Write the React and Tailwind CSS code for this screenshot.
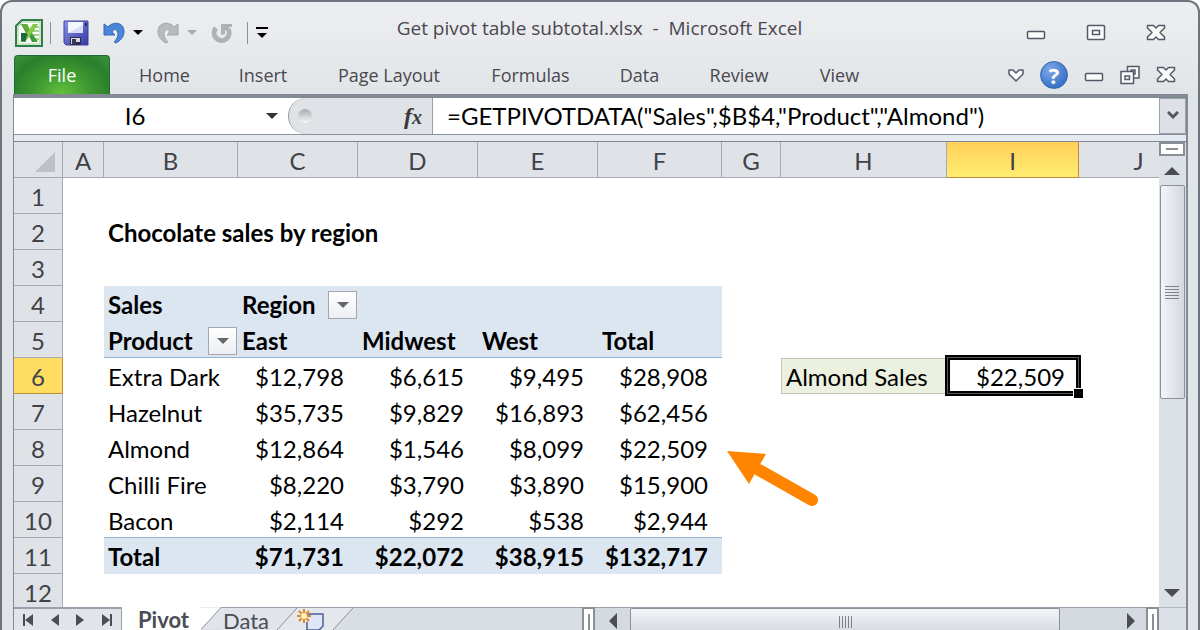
import clsx from 'clsx'

const ribbonTabs = [
  { name: 'Home', width: 'w-[99px]' },
  { name: 'Insert', width: 'w-[98px]' },
  { name: 'Page Layout', width: 'w-[154px]' },
  { name: 'Formulas', width: 'w-[129px]' },
  { name: 'Data', width: 'w-[89px]' },
  { name: 'Review', width: 'w-[110px]' },
  { name: 'View', width: 'w-[91px]' },
];

const columns = [
  { letter: 'A', width: 'w-[41px]' },
  { letter: 'B', width: 'w-[134px]' },
  { letter: 'C', width: 'w-[120px]' },
  { letter: 'D', width: 'w-[120px]' },
  { letter: 'E', width: 'w-[120px]' },
  { letter: 'F', width: 'w-[124px]' },
  { letter: 'G', width: 'w-[59px]' },
  { letter: 'H', width: 'w-[166px]' },
  { letter: 'I', width: 'w-[132px]' },
  { letter: 'J', width: 'w-[120px]' },
];

const cells = {
  2: { B: 'Chocolate sales by region' },
  4: { B: 'Sales', C: 'Region' },
  5: { B: 'Product', C: 'East', D: 'Midwest', E: 'West', F: 'Total' },
  6: { B: 'Extra Dark', C: '$12,798', D: '$6,615', E: '$9,495', F: '$28,908', H: 'Almond Sales', I: '$22,509' },
  7: { B: 'Hazelnut', C: '$35,735', D: '$9,829', E: '$16,893', F: '$62,456' },
  8: { B: 'Almond', C: '$12,864', D: '$1,546', E: '$8,099', F: '$22,509' },
  9: { B: 'Chilli Fire', C: '$8,220', D: '$3,790', E: '$3,890', F: '$15,900' },
  10: { B: 'Bacon', C: '$2,114', D: '$292', E: '$538', F: '$2,944' },
  11: { B: 'Total', C: '$71,731', D: '$22,072', E: '$38,915', F: '$132,717' },
};

const rowNumbers = [1, 2, 3, 4, 5, 6, 7, 8, 9, 10, 11, 12];
const boldRows = [2, 4, 5, 11];
const shadedRows = [4, 5, 11];
const filterCells = ['C4', 'B5'];
const selected = { column: 'I', row: 6 };

const Triangle = ({ direction = 'down', className = 'h-[5px] w-[10px]' }) => {
  const points = {
    down: '0,0 10,0 5,10',
    up: '0,10 10,10 5,0',
    left: '10,0 10,10 0,5',
    right: '0,0 0,10 10,5',
  };
  return (
    <svg viewBox="0 0 10 10" preserveAspectRatio="none" className={className} fill="currentColor">
      <polygon points={points[direction]} />
    </svg>
  );
};

const ExcelIcon = () => (
  <svg viewBox="0 0 28 28" className="h-7 w-7">
    <path d="M7 1H27V27H1V7Z" fill="#f4faf2" stroke="#2f7d4b" strokeWidth="2" />
    <path d="M3 8L8 3H25V25H3Z" fill="#fff" stroke="#9fd08b" strokeWidth="1" />
    <path d="M17 8h7M18 12h6M18 16h6M18 20h6" stroke="#a5d493" strokeWidth="2" />
    <path d="M6 5H12L15 11L18 5H23L17 14L23 23H17L14 17L10 23H5L11 14Z" fill="#3f9a3a" />
    <path d="M18 5H23L10 23H5Z" fill="#8ccb45" />
    <path d="M6 5H12L14 9L11 14Z" fill="#5fae3d" />
    <path d="M6 22L6 14L11 14L14 17L10 23Z" fill="#1d6a41" />
    <path d="M10 23L18 12L19 8L12 17Z" fill="#8ccb45" />
  </svg>
);

const SaveIcon = () => (
  <svg viewBox="0 0 26 26" className="h-[26px] w-[26px]">
    <defs>
      <linearGradient id="disk" x1="0" y1="0" x2="1" y2="1">
        <stop offset="0" stopColor="#8b92e8" />
        <stop offset="1" stopColor="#3438a0" />
      </linearGradient>
    </defs>
    <path d="M1 1H25V25H3L1 23Z" fill="url(#disk)" stroke="#3f439c" />
    <path d="M5 2H20V13H5Z" fill="#f3f6fd" />
    <path d="M5 13L20 5V13Z" fill="#d7def3" />
    <rect x="22" y="3" width="2" height="3" fill="#272b72" />
    <rect x="7" y="17" width="11" height="8" fill="#2b2e4e" />
    <path d="M8 18H17V22H13V24H8Z" fill="#d6d9e4" />
    <rect x="9" y="19" width="4" height="5" fill="#383b50" />
  </svg>
);

const UndoIcon = ({ flipped }) => (
  <svg viewBox="0 0 22 22" className={clsx('h-[22px] w-[22px]', flipped && '-scale-x-100')}>
    <path
      d="M1 2L5 5C9 0 17 0 20 5C23 12 19 18 13 21L11 20C15 16 16 12 14 9C13 7 11 7 9 10L12 13H1Z"
      fill={flipped ? '#b9babd' : '#4c86d8'}
      stroke={flipped ? '#a4a5a9' : '#3468bb'}
      strokeWidth="1"
    />
  </svg>
);

const RepeatIcon = () => (
  <svg viewBox="0 0 22 22" className="h-[22px] w-[22px]">
    <path d="M5 6A7.500 7.500 0 1 0 17 7" fill="none" stroke="#b0b1b4" strokeWidth="5" />
    <path d="M10 2H21V5H18L17 8L14 8V12L10 13Z" fill="#b0b1b4" />
  </svg>
);

const MinimizeIcon = () => (
  <svg viewBox="0 0 20 20" className="h-5 w-5">
    <rect x="1.500" y="8.500" width="17" height="7" rx="1" fill="#fbfbfc" stroke="#555867" strokeWidth="1.500" />
  </svg>
);

const MaximizeIcon = () => (
  <svg viewBox="0 0 20 20" className="h-5 w-5">
    <rect x="1.500" y="2.500" width="17" height="14" rx="1" fill="#fbfbfc" stroke="#555867" strokeWidth="1.500" />
    <rect x="6.500" y="7.500" width="7" height="4" fill="#fff" stroke="#555867" strokeWidth="1.500" />
  </svg>
);

const RestoreIcon = () => (
  <svg viewBox="0 0 20 20" className="h-5 w-5" fill="#fbfbfc" stroke="#555867" strokeWidth="1.500">
    <path d="M7.500 1.500H19V13H7.500Z" />
    <path d="M11 5H15V9H11Z" />
    <path d="M1 6.500H13.500V18.500H1Z" />
    <path d="M5 11H9.500V14.500H5Z" />
  </svg>
);

const CloseIcon = () => (
  <svg viewBox="0 0 20 20" className="h-5 w-5">
    <path
      d="M1.500 2.500H7.500L10 5L12.500 2.500H18.500V5L14 9.500L18.500 14V16.500H12.500L10 14L7.500 16.500H1.500V14L6 9.500L1.500 5Z"
      fill="#fbfbfc"
      stroke="#555867"
      strokeWidth="1.500"
      strokeLinejoin="round"
    />
  </svg>
);

const TitleBar = () => (
  <header className="flex h-[53px] items-center">
    <div className="flex flex-1 items-center pt-2">
      <div className="flex w-[33px] pl-[2px]"><ExcelIcon /></div>
      <span className="ml-1 h-[22px] w-px bg-[#8d9096]" />
      <button aria-label="Save" className="ml-3"><SaveIcon /></button>
      <button aria-label="Undo" className="ml-[14px]"><UndoIcon /></button>
      <button aria-label="Undo history" className="ml-2 text-black"><Triangle /></button>
      <button aria-label="Redo" className="ml-[14px]"><UndoIcon flipped /></button>
      <button aria-label="Redo history" className="ml-2 text-[#a9abaf]"><Triangle /></button>
      <button aria-label="Repeat" className="ml-[14px]"><RepeatIcon /></button>
      <span className="ml-[14px] h-[22px] w-px bg-[#8d9096]" />
      <button aria-label="Customize toolbar" className="ml-2 flex flex-col items-center gap-1 text-black">
        <span className="h-[2px] w-3 bg-black" />
        <Triangle />
      </button>
    </div>
    <h1 className="pl-5 font-['Open_Sans',sans-serif] text-[19px] text-[#4b4750]">
      Get pivot table subtotal.xlsx&nbsp; -&nbsp; Microsoft Excel
    </h1>
    <div className="flex flex-1 items-center justify-end gap-10 pt-2 pr-[22px]">
      <button aria-label="Minimize"><MinimizeIcon /></button>
      <button aria-label="Restore"><MaximizeIcon /></button>
      <button aria-label="Close"><CloseIcon /></button>
    </div>
  </header>
);

const Ribbon = () => (
  <nav className="flex h-[39px] items-stretch justify-between font-['Open_Sans',sans-serif] text-[18px] text-[#4b4750]">
    <div className="flex">
      <button className="mr-[5px] ml-px w-24 rounded-t-[4px] border border-b-0 border-[#1f6b33] bg-[radial-gradient(ellipse_at_bottom,#62c13c_0%,#3c9630_45%,#2a7f2c_75%,#3f9440_100%)] pt-px text-white">
        File
      </button>
      {ribbonTabs.map((tab) => (
        <button key={tab.name} className={clsx('pt-[2px] text-center whitespace-nowrap', tab.width)}>
          {tab.name}
        </button>
      ))}
    </div>
    <div className="flex items-center gap-4 pr-3">
      <button aria-label="Collapse ribbon">
        <svg viewBox="0 0 16 14" className="h-[14px] w-4">
          <path d="M1 2H5L8 5L11 2H15V6L8 13L1 6Z" fill="#fbfbfc" stroke="#555867" strokeWidth="1.500" strokeLinejoin="round" />
        </svg>
      </button>
      <button
        aria-label="Help"
        className="h-7 w-7 rounded-full border border-[#3565b0] bg-[radial-gradient(circle_at_35%_30%,#7fa9e8,#3b74c9_70%)] text-[22px] leading-6 font-bold text-white"
      >
        ?
      </button>
      <button aria-label="Minimize workbook"><MinimizeIcon /></button>
      <button aria-label="Restore workbook"><RestoreIcon /></button>
      <button aria-label="Close workbook"><CloseIcon /></button>
    </div>
  </nav>
);

const FormulaBar = () => (
  <div className="flex h-[37px] border-b border-[#8c929b] bg-white text-2xl text-black">
    <input aria-label="Name box" defaultValue="I6" className="w-[242px] bg-white text-center text-2xl outline-none" />
    <button aria-label="Name list" className="flex w-[32px] items-center justify-center text-[#333]">
      <Triangle className="h-[6px] w-3" />
    </button>
    <div className="flex w-[145px] items-center justify-between rounded-l-full border border-y-0 border-[#989ea6] bg-[#dfe2e7] pr-[10px] pl-[9px]">
      <span className="h-[14px] w-[14px] rounded-full bg-linear-to-b from-[#a9acb0] to-[#f7f8f9]" />
      <button aria-label="Insert function" className="font-['Liberation_Serif',serif] text-2xl font-bold text-[#3a3a3a] italic">
        f<span className="text-xl">x</span>
      </button>
    </div>
    <input
      aria-label="Formula"
      defaultValue={'=GETPIVOTDATA("Sales",$B$4,"Product","Almond")'}
      className="min-w-0 flex-1 bg-white pl-[14px] text-2xl outline-none"
    />
    <button aria-label="Expand formula bar" className="flex w-[27px] items-center justify-center border border-[#9aa0a8] bg-[#dde1e7]">
      <svg viewBox="0 0 12 10" className="h-[10px] w-3">
        <path d="M1 1L6 6L11 1" fill="none" stroke="#55585e" strokeWidth="3" />
      </svg>
    </button>
  </div>
);

const FilterButton = ({ label }) => (
  <button
    aria-label={label}
    className="flex h-7 w-[29px] shrink-0 items-center justify-center border border-[#a4a8ae] bg-linear-to-b from-white to-[#eceef3] text-[#63666b]"
  >
    <Triangle className="h-[6px] w-3" />
  </button>
);

const Cell = ({ column, row }) => {
  const value = cells[row]?.[column];
  const inPivot = 'BCDEF'.includes(column);
  const isNumber = value?.startsWith('$');
  const isSelected = column === selected.column && row === selected.row;
  const hasFilter = filterCells.includes(column + row);

  return (
    <td
      className={clsx(
        'h-9 pt-[2px] pb-0 whitespace-nowrap',
        isNumber ? 'pr-[14px] text-right' : 'pl-1',
        boldRows.includes(row) && 'font-bold',
        inPivot && shadedRows.includes(row) && 'bg-[#dce6f1]',
        inPivot && (row === 5 || row === 10) && 'border-b border-[#95b3d7]',
        column === 'H' && row === 6 && 'border border-[#bfc4b6] bg-[#ebf1de]',
        isSelected && 'relative'
      )}
    >
      {hasFilter ? (
        <div className="flex items-center justify-between pr-px">
          {value}
          <FilterButton label={`Filter ${value}`} />
        </div>
      ) : value}
      {isSelected && (
        <>
          <span className="absolute -inset-x-[2px] -top-[3px] -bottom-[2px] border-[5px] border-black outline-1 -outline-offset-3 outline-[#55585c]" />
          <span className="absolute -right-[4px] -bottom-[4px] h-[10px] w-[10px] border-t border-l border-white bg-black" />
        </>
      )}
    </td>
  );
};

const Sheet = () => (
  <div className="relative min-w-0 flex-1 overflow-hidden bg-white">
    <table className="w-[1185px] table-fixed border-separate border-spacing-0 text-2xl leading-7 text-black">
      <thead>
        <tr className="text-[#3f4247]">
          <th className="h-9 w-[49px] border-r border-b border-[#a5abb3] bg-[#dfe2e7] p-0">
            <svg viewBox="0 0 20 20" className="mt-1 ml-[21px] h-5 w-5">
              <polygon points="20,0 20,20 0,20" fill="#bcc1c7" />
            </svg>
          </th>
          {columns.map((column) => (
            <th
              key={column.letter}
              scope="col"
              className={clsx(
                'border-r border-b px-0 pt-[3px] pb-0 font-normal',
                column.width,
                column.letter === selected.column
                  ? 'border-[#c58a35] bg-linear-to-b from-[#ffcf58] to-[#ffee72]'
                  : 'border-[#a5abb3] bg-[#dfe2e7]'
              )}
            >
              {column.letter}
            </th>
          ))}
        </tr>
      </thead>
      <tbody>
        {rowNumbers.map((row) => (
          <tr key={row}>
            <th
              scope="row"
              className={clsx(
                'h-9 border-r border-b px-0 pt-[2px] pb-0 font-normal text-[#3f4247]',
                row === selected.row ? 'border-[#c58a35] bg-[#ffdc62]' : 'border-[#a5abb3] bg-[#dfe2e7]'
              )}
            >
              {row}
            </th>
            {columns.map((column) => (
              <Cell key={column.letter} column={column.letter} row={row} />
            ))}
          </tr>
        ))}
      </tbody>
    </table>

    {/* Callout arrow pointing at the Almond total */}
    <svg viewBox="0 0 92 56" className="absolute top-[309px] left-[713px] h-14 w-[92px]">
      <path d="M32 19L85 49" stroke="#ff8400" strokeWidth="12" strokeLinecap="round" />
      <polygon points="0,0 39,3 22,33" fill="#ff8400" />
    </svg>
  </div>
);

const VerticalScrollbar = () => (
  <div className="flex w-[27px] flex-col items-center bg-[#dce0e7] pr-px text-[#4a4d52]">
    <div className="flex h-[14px] w-[26px] shrink-0 items-center justify-center border-2 border-[#8b9097] bg-white">
      <span className="h-[2px] w-3 bg-[#8b9097]" />
    </div>
    <button aria-label="Scroll up" className="flex h-[29px] shrink-0 items-center">
      <Triangle direction="up" className="h-2 w-4" />
    </button>
    <div className="flex h-[214px] w-[25px] shrink-0 flex-col items-center justify-center gap-[2px] rounded-[2px] border border-[#8b919b] bg-linear-to-r from-[#f3f5f8] to-[#d3d7df]">
      <span className="h-px w-[14px] bg-[#7d828a]" />
      <span className="h-px w-[14px] bg-[#7d828a]" />
      <span className="h-px w-[14px] bg-[#7d828a]" />
      <span className="h-px w-[14px] bg-[#7d828a]" />
      <span className="h-px w-[14px] bg-[#7d828a]" />
    </div>
    <button aria-label="Scroll down" className="mt-auto flex h-[29px] shrink-0 items-center">
      <Triangle className="h-2 w-4" />
    </button>
  </div>
);

const Slant = ({ left, right }) => (
  <svg viewBox="0 0 20 22" className="h-full w-5 shrink-0">
    <path d="M0 0H20L0 22Z" fill={left} />
    <path d="M20 0V22H0Z" fill={right} />
    <path d="M0 22L20 0" stroke="#8b919b" strokeWidth="1" />
  </svg>
);

const SheetBar = () => (
  <footer className="flex h-[23px] shrink-0 overflow-hidden bg-[#d5d9e0] text-[#4a4d55]">
    <div className="flex w-[108px] shrink-0 items-center justify-between border-t-2 border-r border-[#9ba1ab] bg-[#e1e4ea] px-[9px]">
      <button aria-label="First sheet" className="flex">
        <span className="h-3 w-[2px] bg-[#4a4d55]" />
        <Triangle direction="left" className="h-3 w-2" />
      </button>
      <button aria-label="Previous sheet"><Triangle direction="left" className="h-3 w-2" /></button>
      <button aria-label="Next sheet"><Triangle direction="right" className="h-3 w-2" /></button>
      <button aria-label="Last sheet" className="flex">
        <Triangle direction="right" className="h-3 w-2" />
        <span className="h-3 w-[2px] bg-[#4a4d55]" />
      </button>
    </div>
    <button className="w-[79px] shrink-0 bg-white pl-1 text-[22px] leading-[26px] font-bold">Pivot</button>
    <Slant left="#fff" right="#e1e4e9" />
    <div className="flex min-w-0 flex-1 border-t border-[#9ba1ab]">
      <button className="w-[56px] shrink-0 bg-[#e1e4e9] pr-[6px] text-[22px] leading-[26px]">Data</button>
      <Slant left="#e1e4e9" right="#e4e7ec" />
      <button aria-label="Insert sheet" className="flex w-[36px] shrink-0 bg-[#e4e7ec]">
        <svg viewBox="0 0 28 24" className="h-6 w-7">
          <path d="M8 6H26V18L22 22H10V14" fill="#dfe6f7" stroke="#4d5f94" strokeWidth="1.500" />
          <path d="M7 1V15M0 8H14M2 3L12 13M12 3L2 13" stroke="#e08a1e" strokeWidth="2" />
          <circle cx="7" cy="8" r="3" fill="#fff3c4" />
        </svg>
      </button>
      <Slant left="#e4e7ec" right="#d9dde4" />
      <span className="flex-1 bg-[#d9dde4]" />
    </div>
    <div className="flex w-[13px] shrink-0 items-end justify-center border-2 border-b-0 border-[#8b9097] bg-white">
      <span className="h-4 w-[2px] bg-[#8b9097]" />
    </div>
    <div className="flex w-[47%] shrink-0 items-stretch border-t border-[#9ba1ab]">
      <button aria-label="Scroll left" className="flex w-[35px] items-center justify-center pt-1">
        <Triangle direction="left" className="h-4 w-2" />
      </button>
      <div className="flex w-[430px] items-center justify-center gap-[2px] rounded-t-[2px] border border-b-0 border-[#8b919b] bg-linear-to-b from-[#f3f5f8] to-[#d8dce3] pt-1">
        <span className="h-3 w-px bg-[#7d828a]" />
        <span className="h-3 w-px bg-[#7d828a]" />
        <span className="h-3 w-px bg-[#7d828a]" />
        <span className="h-3 w-px bg-[#7d828a]" />
        <span className="h-3 w-px bg-[#7d828a]" />
      </div>
      <button aria-label="Scroll right" className="ml-auto flex w-[30px] items-center justify-center pt-1">
        <Triangle direction="right" className="h-4 w-2" />
      </button>
    </div>
    <div className="flex w-[13px] shrink-0 items-end justify-center border-2 border-b-0 border-[#8b9097] bg-white">
      <span className="h-4 w-[2px] bg-[#8b9097]" />
    </div>
    <span className="w-[27px] shrink-0 border-t border-[#b4b9c1] bg-[#dce0e7]" />
  </footer>
);

const App = () => {
  return (
    <div className="h-screen bg-white font-['Lato',sans-serif]">
      <div className="flex h-full flex-col overflow-hidden rounded-t-xl border-2 border-b-0 border-[#6e747d] bg-[#e6e9ed] bg-linear-to-b from-[#edeef1] to-[#e1e5e7] to-[94px]">
        <div className="pr-[10px] pl-[11px]">
          <TitleBar />
          <Ribbon />
        </div>
        <main className="mr-[10px] ml-[11px] flex min-h-0 flex-1 flex-col border-t-4 border-r-2 border-l border-[#828a94]">
          <FormulaBar />
          <div className="h-[7px] shrink-0 border-b border-[#82878f] bg-[#e6eaf3]" />
          <div className="flex min-h-0 flex-1">
            <Sheet />
            <VerticalScrollbar />
          </div>
          <SheetBar />
        </main>
      </div>
    </div>
  );
};

export default App;
